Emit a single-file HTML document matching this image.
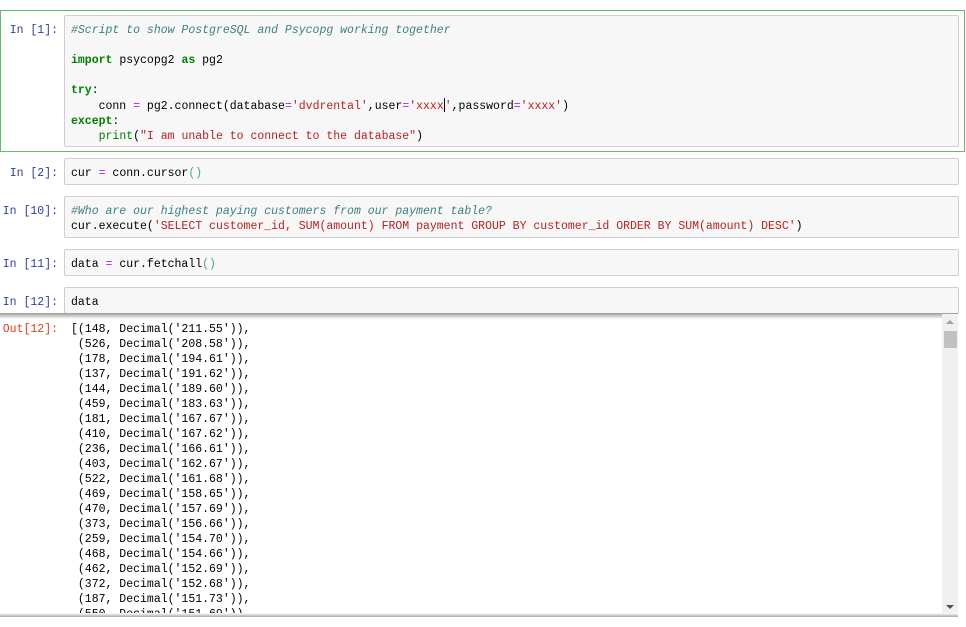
<!DOCTYPE html>
<html><head><meta charset="utf-8"><style>
body{margin:0;background:#fff;width:966px;height:627px;overflow:hidden;position:relative;font-family:"Liberation Mono",monospace;font-size:11.5px;}
.p{position:absolute;right:908px;color:#303f9f;white-space:pre;line-height:15px}
.o{color:#d84315}
.box{position:absolute;left:64px;width:893px;background:#f7f7f7;border:1px solid #cfcfcf;border-radius:2px}
.code{position:absolute;left:71px;white-space:pre;line-height:15px;color:#000}
.c{color:#408080;font-style:italic}.k{color:#008000;font-weight:bold}.s{color:#ba2121}.op{color:#aa22ff}.b{color:#44aa88}.n{color:#008000}
.cur{display:inline-block;width:0;height:14px;border-left:1px solid #000;vertical-align:-3px}
</style></head><body>
<div style="position:absolute;left:0;top:10px;width:963px;height:140px;border:1px solid #66bb6a;"></div>
<div class="box" style="top:15px;height:130px"></div>
<div class="p" style="top:23px">In [1]:</div>
<div class="code" style="top:23px"><span class="c">#Script to show PostgreSQL and Psycopg working together</span>

<span class="k">import</span> psycopg2 <span class="k">as</span> pg2

<span class="k">try</span>:
    conn <span class="op">=</span> pg2.connect(database<span class="op">=</span><span class="s">'dvdrental'</span>,user<span class="op">=</span><span class="s">'xxxx</span><span class="cur"></span><span class="s">'</span>,password<span class="op">=</span><span class="s">'xxxx'</span>)
<span class="k">except</span>:
    <span class="n">print</span>(<span class="s">"I am unable to connect to the database"</span>)</div>

<div class="box" style="top:158px;height:25px"></div>
<div class="p" style="top:166px">In [2]:</div>
<div class="code" style="top:166px">cur <span class="op">=</span> conn.cursor<span class="b">()</span></div>

<div class="box" style="top:196px;height:40px"></div>
<div class="p" style="top:204px">In [10]:</div>
<div class="code" style="top:204px"><span class="c">#Who are our highest paying customers from our payment table?</span>
cur.execute(<span class="s">'SELECT customer_id, SUM(amount) FROM payment GROUP BY customer_id ORDER BY SUM(amount) DESC'</span>)</div>

<div class="box" style="top:249px;height:25px"></div>
<div class="p" style="top:257px">In [11]:</div>
<div class="code" style="top:257px">data <span class="op">=</span> cur.fetchall<span class="b">()</span></div>

<div class="box" style="top:287px;height:25px"></div>
<div class="p" style="top:295px">In [12]:</div>
<div class="code" style="top:295px">data</div>

<div style="position:absolute;left:0;top:313px;width:958px;height:6px;background:linear-gradient(#999,#fff)"></div>
<div class="p o" style="top:322px">Out[12]:</div>
<div class="code" style="top:322px;height:292px;overflow:hidden">[(148, Decimal('211.55')),
 (526, Decimal('208.58')),
 (178, Decimal('194.61')),
 (137, Decimal('191.62')),
 (144, Decimal('189.60')),
 (459, Decimal('183.63')),
 (181, Decimal('167.67')),
 (410, Decimal('167.62')),
 (236, Decimal('166.61')),
 (403, Decimal('162.67')),
 (522, Decimal('161.68')),
 (469, Decimal('158.65')),
 (470, Decimal('157.69')),
 (373, Decimal('156.66')),
 (259, Decimal('154.70')),
 (468, Decimal('154.66')),
 (462, Decimal('152.69')),
 (372, Decimal('152.68')),
 (187, Decimal('151.73')),
 (550, Decimal('151.69')),</div>
<div style="position:absolute;left:942px;top:314px;width:16px;height:302px;background:#f0f0f0"></div>
<div style="position:absolute;left:944px;top:331px;width:13px;height:17px;background:#c1c1c1"></div>
<div style="position:absolute;left:946px;top:320px;width:0;height:0;border-left:4px solid transparent;border-right:4px solid transparent;border-bottom:4px solid #a3a3a3"></div>
<div style="position:absolute;left:946px;top:605px;width:0;height:0;border-left:4px solid transparent;border-right:4px solid transparent;border-top:4px solid #505050"></div>
<div style="position:absolute;left:0;top:613px;width:958px;height:4px;background:linear-gradient(#fff,#aaa)"></div>
</body></html>
